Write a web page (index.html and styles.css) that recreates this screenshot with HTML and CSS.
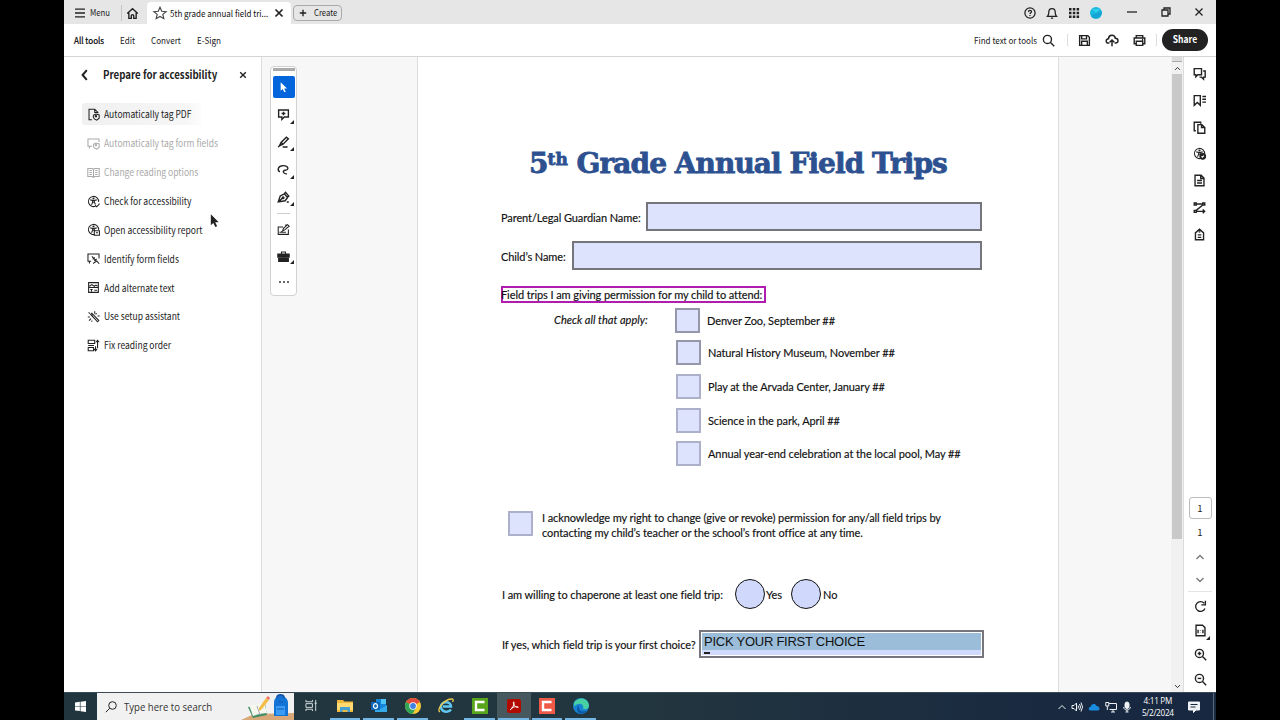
FILE: index.html
```html
<!DOCTYPE html>
<html lang="en">
<head>
<meta charset="utf-8">
<title>5th grade annual field trips</title>
<link rel="stylesheet" href="styles.css">
</head>
<body>
<svg class="defs" aria-hidden="true">
  <symbol id="cursor" viewBox="0 0 12 16"><path d="M1 0v13l3-2.700 2.400 5 2.200-1-2.400-4.800H10.500z"/></symbol>
  <symbol id="close" viewBox="0 0 10 10"><path d="M1.500 1.500l7 7m0-7l-7 7"/></symbol>
  <symbol id="comment" viewBox="0 0 16 16"><path d="M2 2.500h12v8.500H9L6 14v-3H2zM8 4.500v4.500M5.700 6.700h4.600"/></symbol>
  <symbol id="a11y" viewBox="0 0 16 16"><path d="M10.500 13.800a6.300 6.300 0 1 1 3.800-5.300"/><path d="M4 6l3 .8v2L5.600 12M12 6l-3 .8v2l1.400 3M7 6.800h2M7.500 9h1"/><circle cx="8" cy="4.300" r=".7"/></symbol>
  <symbol id="chev-up" viewBox="0 0 10 10"><path d="M1.500 7L5 3.500 8.500 7"/></symbol>
  <symbol id="chev-down" viewBox="0 0 10 10"><path d="M1.500 3L5 6.500 8.500 3"/></symbol>
  <symbol id="magnify" viewBox="0 0 16 16"><circle cx="6.700" cy="6.700" r="5"/><path d="M10.500 10.500l4.500 4.500"/></symbol>
</svg>
<div class="screen">
<header class="titlebar">
  <div class="menu"><svg class="ic i12" viewBox="0 0 12 12"><path d="M1 2.200h10M1 6h10M1 9.800h10"/></svg><span class="narrow">Menu</span></div>
  <i class="sep"></i>
  <svg class="ic home heavy" viewBox="0 0 16 16"><path d="M1.500 8L8 2l6.500 6M3.500 7v7h3v-3.500q0-1 1.500-1t1.500 1V14h3V7"/></svg>
  <div class="tab">
    <svg class="ic star" viewBox="0 0 16 16"><path d="M8 1.400l2 4.600 5 .4-3.800 3.200 1.200 4.900L8 11.900l-4.400 2.600 1.200-4.900L1 6.400 6 6z"/></svg>
    <span class="tab-name narrow">5th grade annual field tri...</span>
    <svg class="ic i10 heavy"><use href="#close"/></svg>
  </div>
  <div class="create"><svg class="ic i8 heavy" viewBox="0 0 10 10"><path d="M5 1v8M1 5h8"/></svg><span class="narrow">Create</span></div>
  <div class="wincontrols">
    <svg class="ic i12 heavy" viewBox="0 0 16 16"><circle cx="8" cy="8" r="6.800"/><path d="M6 6.500C6 4 10 4 10 6.200 10 7.500 8 7.700 8 9.200M8 10.700v1.300"/></svg>
    <svg class="ic i12 heavy" viewBox="0 0 16 16"><path d="M2 12.500c1.500-1.500 1.700-3 1.700-5.500 0-6.500 8.600-6.500 8.600 0 0 2.500.2 4 1.700 5.500zM6.500 14.700h3"/></svg>
    <svg class="ic i12 solid" viewBox="0 0 12 12"><path d="M1 1h2.500v2.500H1zM4.800 1h2.500v2.500H4.800zM8.600 1h2.500v2.500H8.600zM1 4.800h2.500v2.500H1zM4.800 4.800h2.500v2.500H4.800zM8.600 4.800h2.500v2.500H8.600zM1 8.600h2.500v2.500H1zM4.800 8.600h2.500v2.500H4.800zM8.600 8.600h2.500v2.500H8.600z"/></svg>
    <svg class="avatar" viewBox="0 0 12 12"><circle cx="6" cy="6" r="6" fill="#18b8e0"/><path d="M6 6l5.500-2A6 6 0 0 1 1 9z" fill="#17a3d3"/><path d="M2 2l8 0L6 6z" fill="#2ed0ec"/></svg>
    <svg class="ic i10 min" viewBox="0 0 10 10"><path d="M0 5h10"/></svg>
    <svg class="ic i10 restore" viewBox="0 0 10 10"><path d="M1 3h6v6H1zM3 3V1h6v6H7"/></svg>
    <svg class="ic i10 shut"><use href="#close"/></svg>
  </div>
</header>
<nav class="toolbar">
  <span class="tb-all narrow">All tools</span><span class="tb-edit narrow">Edit</span><span class="tb-convert narrow">Convert</span><span class="narrow">E-Sign</span>
  <div class="tb-right">
    <span class="find narrow">Find text or tools</span>
    <svg class="ic i13 heavy"><use href="#magnify"/></svg>
    <i class="sep light"></i>
    <svg class="ic i13 save heavy" viewBox="0 0 16 16"><path d="M2 2h10l2 2v10H2zM4.500 2v4h6V2M4.500 14V9h7v5"/></svg>
    <svg class="ic cloud heavy" viewBox="0 0 16 16"><path d="M5 11.500H3.800C.5 11.500.5 6.800 4 6.500 4.500 1.500 11 1.500 11.800 6c4 0 4 5.500.4 5.500H11M8 15V8.500M5.300 10.500L8 8l2.700 2.500"/></svg>
    <svg class="ic i13 print heavy" viewBox="0 0 16 16"><path d="M4 5V2h8v3M4 12H1.500V5h13v7H12M4 9h8v5H4zM11 7h1.500"/></svg>
    <i class="sep light last"></i>
    <span class="share"><span class="narrow mid">Share</span></span>
  </div>
</nav>
<main class="work">
  <aside class="side">
    <div class="side-head">
      <svg class="ic i12 heavy" viewBox="0 0 10 10"><path d="M6.500 1L3 5l3.500 4"/></svg>
      <h2 class="narrow">Prepare for accessibility</h2>
      <svg class="ic i8 heavy"><use href="#close"/></svg>
    </div>
    <ul class="tools">
      <li class="active"><svg class="ic i13" viewBox="0 0 16 16"><path d="M6 14.500H2.500v-13h7l4 4v1M9.500 1.500v4h4M8 9l3-1.500 4 1v4L12 15l-3-1.500-1.300-2.500z"/><circle cx="11" cy="10" r=".8"/></svg><span class="narrow">Automatically tag PDF</span></li>
      <li class="off"><svg class="ic i13" viewBox="0 0 16 16"><path d="M6 11.500H1.200v-9h13.600V6M8 9l3-1.500 4 1v4L12 15l-3-1.500-1.300-2.500zM3 11.500V14"/><circle cx="11" cy="10" r=".8"/></svg><span class="narrow">Automatically tag form fields</span></li>
      <li class="off"><svg class="ic i13" viewBox="0 0 16 16"><path d="M1 3h5.500L8 4l1.500-1H15v10H9.500L8 14l-1.500-1H1zM8 4v10M3 5.500h3M3 8h3M3 10.500h3M10 5.500h3M10 8h3M10 10.500h3"/></svg><span class="narrow">Change reading options</span></li>
      <li><svg class="ic i13" viewBox="0 0 16 16"><use href="#a11y"/><path d="M10 12.500l2 2 3.500-4"/></svg><span class="narrow">Check for accessibility</span></li>
      <li><svg class="ic i13" viewBox="0 0 16 16"><use href="#a11y"/><path fill="#fff" d="M9 9.500h6.300v5.500H9zM11 12h2.500"/></svg><span class="narrow">Open accessibility report</span></li>
      <li><svg class="ic i13" viewBox="0 0 16 16"><path d="M5 11.500H1.200v-9h13.600V8M3 11.500V14M6 5.500l5 5M7 9l2.500-2.500M9 11l3-2.500M8 14.500c0-3 3-1 4-4M12 11l3 3.500"/></svg><span class="narrow">Identify form fields</span></li>
      <li><svg class="ic i13" viewBox="0 0 16 16"><path d="M2 2h12v12H2zM2 8h12M3 6.500l3-2 3 2 2-1.500 2 1.500M4 10.500h3M5.500 10.500V13M9 11.500h3.500"/></svg><span class="narrow">Add alternate text</span></li>
      <li><svg class="ic i13" viewBox="0 0 16 16"><path d="M4.500 5.500L6 4l8.500 9-1.500 1.500zM6 7l1.600-1.600M9.500 1.500v3M1 8.500h2.500M12 4l-1.500 1.500M2 3l1.500 1.500M13 7.500h2.500M2.500 13L5 10.500M6 13v1.500"/></svg><span class="narrow">Use setup assistant</span></li>
      <li><svg class="ic i13" viewBox="0 0 16 16"><path d="M1.500 1.500h8v4h-8zM1.500 10.500h6.500v4H1.500zM1.500 8h7M13 11.500V2M11 4l2-2.300L15 4M10.500 9v5M8.700 12.200l1.800 2.300 1.800-2.300"/></svg><span class="narrow">Fix reading order</span></li>
    </ul>
    <svg class="pointer"><use href="#cursor"/></svg>
  </aside>
  <section class="canvas">
    <div class="palette">
      <i class="grip"></i>
      <div class="pick"><svg class="pick-arrow"><use href="#cursor"/></svg></div>
      <div class="p corner"><svg class="ic i13 heavy"><use href="#comment"/></svg></div>
      <div class="p corner"><svg class="ic i13 heavy" viewBox="0 0 16 16"><path d="M3 12L5 8l6.500-6.500 2.500 2L7.500 10zM5 8l2.500 2M1.500 13.500l1.500-1.500M7 13.500h6"/></svg></div>
      <div class="p corner"><svg class="ic i13 heavy" viewBox="0 0 16 16"><path d="M3.500 11C0 9 1 3.500 7.500 3.200s8 5.300 2.500 5.800c-3.500.3-3 4 2 4.500"/></svg></div>
      <div class="p corner"><svg class="ic i13 heavy" viewBox="0 0 16 16"><path d="M1.500 13.500L4 6l5-2.500 4 4.500-3 4zM1.500 13.500L7 8.500M8.500 4l2-2.300 4 4.500-2 1.500M12 13.500h2.500"/><circle cx="7.500" cy="8.200" r="1"/></svg></div>
      <i class="rule"></i>
      <div class="p"><svg class="ic i13" viewBox="0 0 16 16"><path d="M7.500 5H1.500v9h12.500V8M7 9.500l1-3 5-4.500 2 2-5.500 4.500zM3 11.500h2l1-1 1 1h4M10 2.500h3"/></svg></div>
      <div class="p corner"><svg class="ic i13 brief" viewBox="0 0 16 16"><path class="fill" d="M1 5h14v4H1zM2 10.500h12V14H2z"/><path d="M5.500 5V2.500h5V5M6.500 9v2h3V9"/></svg></div>
      <div class="p more"><svg class="ic i12 solid" viewBox="0 0 12 12"><circle cx="2" cy="6" r=".9"/><circle cx="6" cy="6" r=".9"/><circle cx="10" cy="6" r=".9"/></svg></div>
    </div>
    <article class="sheet">
      <h1>5<sup>th</sup> Grade Annual Field Trips</h1>
      <div class="row guardian"><label>Parent/Legal Guardian Name:</label><div class="field"></div></div>
      <div class="row child"><label>Child’s Name:</label><div class="field"></div></div>
      <div class="outlined"><span>Field trips I am giving permission for my child to attend:</span></div>
      <div class="trips">
        <em>Check all that apply:</em>
        <div class="choices">
          <div class="opt o1"><i class="box dark"></i><span>Denver Zoo, September ##</span></div>
          <div class="opt o2"><i class="box dark"></i><span>Natural History Museum, November ##</span></div>
          <div class="opt o3"><i class="box"></i><span>Play at the Arvada Center, January ##</span></div>
          <div class="opt o4"><i class="box"></i><span>Science in the park, April ##</span></div>
          <div class="opt o5"><i class="box"></i><span>Annual year-end celebration at the local pool, May ##</span></div>
        </div>
      </div>
      <div class="ack"><i class="box"></i><p><span>I acknowledge my right to change (give or revoke) permission for any/all field trips by</span><br><span>contacting my child’s teacher or the school’s front office at any time.</span></p></div>
      <div class="row chaperone"><label>I am willing to chaperone at least one field trip:</label><i class="radio"></i><span class="yes">Yes</span><i class="radio"></i><span class="no">No</span></div>
      <div class="row first"><label>If yes, which field trip is your first choice?</label><div class="field select"><span>PICK YOUR FIRST CHOICE</span><i class="caret"></i></div></div>
    </article>
    <div class="scroll"><i class="split"></i><svg class="ic arrow"><use href="#chev-up"/></svg><i class="thumb"></i><svg class="ic arrow down"><use href="#chev-down"/></svg></div>
  </section>
  <aside class="rail">
    <div class="rail-top">
      <svg class="ic i13 heavy" viewBox="0 0 16 16"><path d="M1.500 2h9v7.500H6L3.500 12V9.500h-2zM12.500 5H15v7.500h-2V15l-2.500-2.500H8"/></svg>
      <svg class="ic i13 heavy" viewBox="0 0 16 16"><path d="M1.500 2h7.500v12l-3.700-3.500L1.500 14zM11.500 3H16M11.500 6.500H16M11.500 10H16"/></svg>
      <svg class="ic i13 heavy" viewBox="0 0 16 16"><path d="M6 4.500h5l3.500 3.500v7H6zM10.500 4.500V8h4M3.500 12h-2V1.500h8v2"/></svg>
      <svg class="ic i13" viewBox="0 0 16 16"><use href="#a11y"/><circle class="fill" cx="12" cy="11.500" r="3.500"/><path stroke="#fff" d="M10.500 11.500l1 1 2-2"/></svg>
      <svg class="ic i13 heavy" viewBox="0 0 16 16"><path d="M2.500 1.500h7.500l3.500 3.500v9.500h-11zM9.500 1.500v4h4M5 8h6M5 11h6"/></svg>
      <svg class="ic i13 heavy" viewBox="0 0 16 16"><path d="M1.500 2.500h2.500v2.500H1.500zM12 2.500h2.500v2.500H12zM1.500 11.500h2.500v2.500H1.500zM4 3.700h8M12 5l-8 6.500M4 12.700h10M12 10.500l2.300 2.200L12 15"/></svg>
      <svg class="ic i13 heavy" viewBox="0 0 16 16"><path d="M3 6l5-4.500L13 6v8.500H3zM5.800 8.500h4.400M5.800 11.500h4.400"/><circle cx="8" cy="4.700" r=".4"/></svg>
    </div>
    <div class="rail-bottom">
      <span class="pageno">1</span><span class="pages">1</span>
      <svg class="ic i10 gray"><use href="#chev-up"/></svg>
      <svg class="ic i10 gray next"><use href="#chev-down"/></svg>
      <i class="rule"></i>
      <svg class="ic i13 heavy" viewBox="0 0 16 16"><path d="M13.500 10.500A6 6 0 1 1 12.500 4M14 1v5H9"/></svg>
      <div class="p corner fit"><svg class="ic i13 heavy" viewBox="0 0 16 16"><path d="M2.500 1.500h8l3 3v10h-11zM5 7v4.500M11 7v4.500M8 7.500v.5M8 10v.5"/></svg></div>
      <svg class="ic i13 heavy" viewBox="0 0 16 16"><use href="#magnify"/><path d="M6.700 4.500v4.400M4.500 6.700h4.400"/></svg>
      <svg class="ic i13 heavy" viewBox="0 0 16 16"><use href="#magnify"/><path d="M4.500 6.700h4.400"/></svg>
    </div>
  </aside>
</main>
<footer class="taskbar">
  <div class="start"><svg viewBox="0 0 12 12"><path d="M0 1.700l5.300-.8v4.700H0zM6 .8L12 0v5.600H6zM0 6.300h5.300V11L0 10.300zM6 6.300h6V12l-6-.9z"/></svg></div>
  <div class="search">
    <svg class="lens" viewBox="0 0 12 12"><circle cx="7.500" cy="4.500" r="3.800"/><path d="M4.700 7.300L.8 11.200"/></svg>
    <span class="narrow">Type here to search</span>
    <svg class="supplies" viewBox="0 0 53 26"><path d="M0 26l13-6 40-1v7z" fill="#d9a878"/><path d="M7 13l17-3 2 11-14 3z" fill="#438d68"/><path d="M8 11l8 0 7-3 3 11-8 1-6 2z" fill="#f5f7ee"/><path d="M16 12l3 9" stroke="#aab" fill="none"/><path d="M18 14l7-10 3 2-7 9-3 2z" fill="#f5bd48"/><path d="M25 4l2-2 2 2-1 2z" fill="#ef6f69"/><path d="M33 9c0-5 3-7 7-7s7 3 7 7v13H33z" fill="#1474d6"/><path d="M36 4c0-4 7-4 7 0" stroke="#1558ad" stroke-width="2" fill="none"/><path d="M35 12h9v9h-9z" fill="#3a9cf5"/><path d="M36 15h7M37 8h5" stroke="#1259b0"/></svg>
  </div>
  <div class="app view"><svg viewBox="0 0 14 14"><path d="M1 1v2h7V1M1 13v-2h7v2M1 5h7v4H1zM11.500 1v12M10.300 4.500h2.500" fill="none" stroke="#dce2e4"/></svg></div>
  <div class="app open"><svg viewBox="0 0 16 16"><path d="M0 2h6l1.500 1.500H16V14H0z" fill="#eeb83c"/><path d="M0 5h16v7H0z" fill="#ffda70"/><path d="M3 9h10v5h-2.500v-2h-5v2H3z" fill="#47a0d2"/></svg></div>
  <div class="app open"><svg viewBox="0 0 16 16"><path d="M5 1h10v11H5z" fill="#1685d9"/><path d="M10 1h5v5h-5z" fill="#50c5f5"/><path d="M4 7l6 4 6-4v7H4z" fill="#36a9e9"/><path d="M0 4h9v8H0z" fill="#0c67b9"/><ellipse cx="4.500" cy="8" rx="2" ry="2.300" fill="none" stroke="#fff" stroke-width="1.200"/></svg></div>
  <div class="app open"><svg viewBox="0 0 16 16"><circle cx="8" cy="8" r="8" fill="#f7ca35"/><path d="M8 8L1.100 4A8 8 0 0 1 14.900 4z" fill="#e24b3d"/><path d="M1.100 4A8 8 0 0 0 7.500 16L11 10 8 8z" fill="#31a457"/><circle cx="8" cy="8" r="3.700" fill="#fff"/><circle cx="8" cy="8" r="2.900" fill="#3e80e4"/></svg></div>
  <div class="app"><svg viewBox="0 0 16 16"><path d="M13 11.500C10 15.500 3 14 3 8.500S12.800 2.800 13 8.500H5" fill="none" stroke="#5fc7f2" stroke-width="2.500"/><path d="M2 14C-2 12 6 1 14 1c2 0 1 2 .5 3" fill="none" stroke="#ecc74c" stroke-width="1.300"/></svg></div>
  <div class="app open"><svg viewBox="0 0 16 16"><path d="M0 0h16v16H0z" fill="#58a51c"/><path d="M12.500 4H4v8h8.500" fill="none" stroke="#fff" stroke-width="2.400"/></svg></div>
  <div class="app open current"><svg viewBox="0 0 16 16"><rect x="1" y="1" width="14" height="14" rx="2" fill="#b30b00"/><path d="M4 12c2-.7 4.300-5 4-7.500-.2-1.700-1.500 0 .3 2.700C9.500 9 12 10 12.300 9.200S8 8.200 5 10.500" fill="none" stroke="#fff"/></svg></div>
  <div class="app open"><svg viewBox="0 0 16 16"><path d="M0 0h16v16H0z" fill="#ee5948"/><path d="M12.500 4H4v8h8.500" fill="none" stroke="#fff" stroke-width="2.400"/></svg></div>
  <div class="app open"><svg viewBox="0 0 16 16"><circle cx="8" cy="8" r="8" fill="#1684d2"/><path d="M1 5C4-2 16-1 16 8c0 3-4 4-6 2.500 1.500-5-5-6.500-9-2z" fill="#48cfa3"/><path d="M6 9c0 5 5 5 8 3.500C12 16 5 17 4 12c0-2 0-3 2-5z" fill="#0e58a8"/></svg></div>
  <div class="tray">
    <svg class="ti up" viewBox="0 0 10 10"><path d="M1.500 7L5 3.500 8.500 7"/></svg>
    <svg class="ti" viewBox="0 0 12 12"><path d="M1 4.500h2L5.500 2v8L3 7.500H1zM7 4.500q1 1.500 0 3M8.500 3q2 3 0 6M10 1.500q3 4.500 0 9"/></svg>
    <svg class="ti" viewBox="0 0 12 12"><path d="M3 9.500C0 9.500 0 6 2.500 6 3 2.500 7.500 2 8.500 5 12 5 12.500 9.500 9.500 9.500z" fill="#198ce0" stroke="none"/></svg>
    <svg class="ti" viewBox="0 0 12 12"><path d="M4 2.500h7.500v6H4.500M8 8.500V11M6 11h4M.8 1.500h3v3.500h-3zM2.300 5v4"/></svg>
    <svg class="ti" viewBox="0 0 12 12"><rect x="4" y="1" width="4" height="6.500" rx="2" fill="#eef2f5"/><path d="M2.700 6c0 4 6.600 4 6.600 0M6 9v2M4.500 11h3"/></svg>
    <div class="clock"><span>4:11 PM</span><span>5/2/2024</span></div>
    <svg class="ti note" viewBox="0 0 12 12"><path d="M.5 1h11v8H8l-2.500 2.500V9h-5z" fill="#eef2f5"/><path d="M2.500 3.500h7M2.500 6h5" stroke="#17283c"/></svg>
    <i class="peek"></i>
  </div>
</footer>
</div>
</body>
</html>
```
FILE: styles.css
```css
* { box-sizing: border-box; }
body { margin: 0; background: #000; font-family: "Noto Sans CJK JP", "Noto Sans", sans-serif; color: #222; }
h1, h2, ul, p { margin: 0; padding: 0; }
i { display: block; font-style: normal; }
span, label { white-space: nowrap; }
.defs { position: absolute; width: 0; height: 0; }
.screen { width: 1152px; height: 720px; margin: 0 auto; display: flex; flex-direction: column; overflow: hidden; }
.narrow { display: block; flex: none; transform: scaleX(.88); transform-origin: 0 50%; }
.mid { transform-origin: 50% 50%; }

.ic { flex: none; display: block; fill: none; stroke: #222; stroke-width: 1.300; overflow: visible; }
.heavy { stroke-width: 1.700; }
.solid { fill: #222; stroke: none; }
.fill { fill: #222; }
.gray { stroke: #777; }
.i8 { width: 8px; height: 8px; }
.i10 { width: 10px; height: 10px; }
.i12 { width: 12px; height: 12px; }
.i13 { width: 13px; height: 13px; }
.sep { width: 1px; height: 16px; background: #c4c4c4; }
.light { height: 12px; background: #ddd; }

.titlebar { flex: none; height: 24px; background: #e6e6e6; display: flex; align-items: center; padding: 2px 14px 0 10px; font-size: 8.800px; line-height: 22px; }
.menu { display: flex; align-items: center; gap: 4px; width: 47px; }
.home { width: 13px; height: 13px; margin: 0 8px 0 4px; }
.tab { flex: none; width: 144px; height: 22px; background: #fff; border-radius: 4px 4px 0 0; display: flex; align-items: center; padding: 0 7px 0 6px; }
.star { width: 14px; height: 14px; margin-right: 3px; stroke: #444; }
.tab-name { width: 104px; color: #111; font-size: 9.100px; }
.create { flex: none; width: 49px; height: 16px; margin-left: 2px; border: 1px solid #aaa; border-radius: 4px; display: flex; align-items: center; padding-left: 5px; gap: 7px; line-height: 14px; }
.wincontrols { margin-left: auto; display: flex; align-items: center; gap: 10px; }
.avatar { width: 12px; height: 12px; }
.min { margin: -2px 14px 0 15px; }
.restore { margin: -2px 13px 0 0; }
.shut { margin: -2px -2px 0 0; }

.toolbar { flex: none; height: 33px; background: #fff; border-bottom: 1px solid #d5d5d5; display: flex; align-items: center; padding: 0 8px 0 10px; font-size: 9.200px; line-height: 32px; }
.tb-all { width: 46px; color: #000; -webkit-text-stroke: .2px #000; }
.tb-edit { width: 31px; }
.tb-convert { width: 46px; }
.tb-right { margin-left: auto; display: flex; align-items: center; }
.find { width: 68px; }
.toolbar .light { margin: 0 10px 0 12px; }
.toolbar .last { margin: 0 5px 0 10px; }
.cloud { width: 14px; height: 14px; margin: 0 14px; }
.share { width: 46px; height: 22px; border-radius: 11px; background: #222; color: #fff; font-weight: 700; font-size: 9.700px; line-height: 21px; text-align: center; }

.work { flex: none; height: 635px; display: flex; background: #f7f7f7; }
.side { width: 198px; background: #fff; border-right: 1px solid #ddd; position: relative; padding-top: 9px; }
.side-head { display: flex; align-items: center; height: 17px; padding-left: 15px; }
.side-head h2 { width: 132px; margin-left: 12px; font-size: 11px; line-height: 17px; font-weight: 700; white-space: nowrap; color: #222; }
.side-head .i8 { margin-left: 4px; }
.tools { list-style: none; padding: 17px 0 0 18px; }
.tools li { height: 28.850px; display: flex; align-items: center; gap: 4px; padding-left: 5px; font-size: 9.700px; line-height: 22px; }
.tools .active { height: 22px; margin: 3px 0 4px; width: 119px; background: linear-gradient(90deg, #f0f0f0, #f6f6f6 85%, #fcfcfc); border-radius: 3px; }
.off { color: #aaa; }
.off .ic { stroke: #aaa; }
.pointer { position: absolute; left: 146px; top: 157px; width: 10px; height: 14px; fill: #222; }

.canvas { flex: 1; display: flex; }
.palette { flex: none; width: 27px; height: 230px; margin: 9px 120px 0 8px; background: #fff; border: 1px solid #d2d2d2; border-radius: 4px; display: flex; flex-direction: column; align-items: center; }
.grip { width: 22px; height: 3px; background: #aaa; margin: 1px 0 5px; flex: none; }
.pick { flex: none; width: 22px; height: 22px; background: #0265dc; border-radius: 2px; display: flex; align-items: center; justify-content: center; margin-bottom: 3px; }
.pick-arrow { width: 8px; height: 11px; fill: #fff; }
.p { flex: none; width: 25px; height: 27.600px; display: flex; align-items: center; justify-content: center; position: relative; }
.corner::after { content: ""; position: absolute; right: 2px; bottom: 5px; border-left: 4px solid transparent; border-bottom: 4px solid #222; }
.rule { flex: none; width: 13px; height: 1px; margin: 2px 0; background: #ccc; }
.palette .rule ~ .p { height: 26.500px; }
.palette .more { margin-top: -1px; }

.sheet { flex: none; width: 642px; background: #fff; border: solid #ddd; border-width: 0 1px; padding-left: 83px; font-family: Lato, sans-serif; color: #111; font-size: 11px; line-height: 15px; letter-spacing: -.090px; -webkit-text-stroke: .15px #111; }
.sheet h1 { height: 38px; margin-top: 88px; padding-left: 28px; font: 700 28px/38px "DejaVu Serif", serif; letter-spacing: -.950px; color: #2d5190; white-space: nowrap; -webkit-text-stroke: .8px #2d5190; }
.sheet sup { font-size: 17px; line-height: 0; vertical-align: 8px; letter-spacing: 0; }
.row { display: flex; align-items: center; }
.field { height: 29px; background: #dde2fd; border: 2px solid #75757c; }
.guardian { margin-top: 19px; }
.guardian label { width: 145px; padding-top: 2px; }
.guardian .field { width: 336px; }
.child { margin-top: 10px; }
.child label { width: 71px; padding-top: 2px; }
.child .field { width: 410px; }
.outlined { width: 265px; height: 17px; margin: 16px 0 0; border: 2px solid #b01cb0; line-height: 13px; text-indent: -2px; }
.trips { display: flex; margin-top: 5px; padding-left: 53px; }
.trips em { width: 122px; line-height: 24px; letter-spacing: .020px; }
.opt { display: flex; align-items: center; gap: 7px; height: 25px; }
.o1 { margin-left: -1px; }
.o2 { margin-top: 7px; }
.o3, .o4 { margin-top: 9px; }
.o5 { margin-top: 8px; }
.box { flex: none; width: 25px; height: 25px; background: #dde2fd; border: 2px solid #acb0c8; }
.dark { border-color: #9598aa; }
.ack { display: flex; gap: 9px; margin-top: 41px; padding-left: 7px; align-items: center; }
.ack p { padding-top: 3px; }
.chaperone { margin-top: 39px; height: 30px; padding-left: 1px; }
.chaperone label { width: 233px; }
.radio { width: 30px; height: 30px; border: 1.500px solid #111; border-radius: 50%; background: #d0d9fc; }
.yes { width: 26px; padding-left: 1px; }
.no { padding: 1px 0 0 2px; }
.first { margin-top: 21px; padding-left: 1px; }
.first label { width: 197px; }
.first .field { width: 285px; height: 28px; padding: 1px; background: #fff; }
.select span { display: block; height: 17px; background: #9bbdda; font: 13px/17px "Liberation Sans", sans-serif; padding-left: 2px; letter-spacing: -.250px; -webkit-text-stroke: 0; }
.caret { height: 5px; background: #d0dafc; position: relative; }
.caret::after { content: ""; position: absolute; left: 2px; top: 2px; width: 6px; height: 2px; background: #222; }
.scroll { width: 12px; margin-left: auto; background: #f1f1f1; display: flex; flex-direction: column; align-items: center; }
.split { width: 10px; height: 5px; background: #ddd; border-bottom: 1px solid #aaa; }
.arrow { width: 7px; height: 7px; margin: 3px 0 2px; }
.thumb { width: 10px; height: 465px; background: #c9c9c9; }
.down { margin-top: auto; }

.rail { width: 33px; background: #fff; border-left: 1px solid #ddd; display: flex; flex-direction: column; justify-content: space-between; }
.rail-top { display: flex; flex-direction: column; align-items: center; gap: 13.800px; padding: 10px 2px 0 0; }
.rail-bottom { display: flex; flex-direction: column; align-items: center; font-size: 9.500px; height: 195px; }
.pageno { width: 23px; height: 22px; border: 1px solid #bbb; border-radius: 3px; text-align: center; line-height: 20px; }
.pages { line-height: 20px; margin: 3px 0 10px; }
.next { margin: 13px 0 4px; }
.rail .rule { width: 24px; margin: 2px 0 8px; background: #e4e4e4; }
.fit { height: 35px; }
.fit::after { bottom: 8px; right: 3px; }
.rail-bottom .fit + .ic { margin-bottom: 12px; }

.taskbar { flex: none; height: 28px; display: flex; background: linear-gradient(90deg, #20353d, #22363f 50%, #172840 90%); font-family: "Open Sans", sans-serif; border-top: 1px solid #3c4a55; }
.start { width: 33px; display: flex; align-items: center; justify-content: center; }
.start svg { width: 11px; height: 11px; fill: #fff; }
.search { flex: none; width: 197px; background: #f1f1f1; display: flex; align-items: center; padding-left: 8px; font-size: 10.900px; }
.search span { width: 117px; margin-left: 7px; color: #333; }
.lens { width: 12px; height: 12px; fill: none; stroke: #222; }
.supplies { width: 53px; height: 26px; }
.app { width: 33.700px; display: flex; align-items: center; justify-content: center; border-bottom: 2px solid transparent; }
.app svg { width: 16px; height: 16px; }
.app.view { width: 34.500px; }
.app.view svg { width: 13px; height: 13px; }
.open { border-image: linear-gradient(90deg, transparent 3px, #74b7e5 3px, #74b7e5 30px, transparent 30px) 2; }
.current { background: #48585f; }
.tray { margin-left: auto; display: flex; align-items: center; gap: 4.600px; }
.ti { width: 12px; height: 12px; fill: none; stroke: #eef2f5; stroke-width: 1; }
.up { width: 10px; height: 10px; }
.clock { width: 40px; display: flex; flex-direction: column; align-items: center; color: #fff; font-size: 8.200px; line-height: 12px; letter-spacing: -0.300px; }
.note { margin: 0 8px 0 6px; }
.peek { width: 3px; height: 27px; border-left: 1px solid #5b6877; }
```
